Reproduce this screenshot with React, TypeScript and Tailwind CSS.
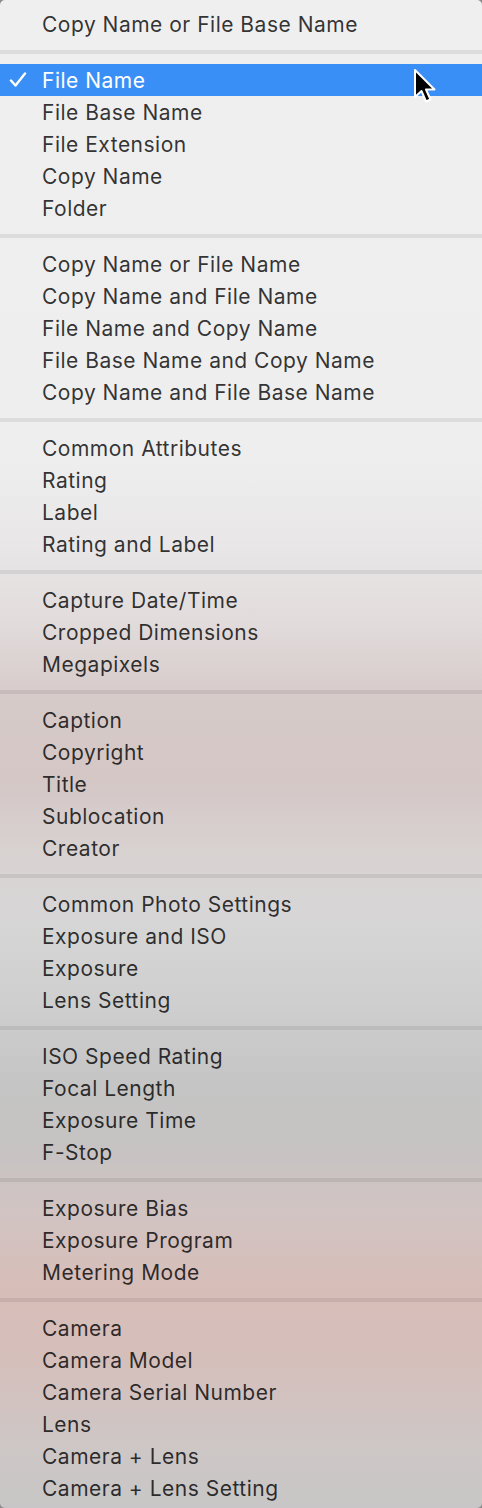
import React from "react";

type Group = { items: string[] };

const groups: Group[] = [
  { items: ["Copy Name or File Base Name"] },
  { items: ["File Name", "File Base Name", "File Extension", "Copy Name", "Folder"] },
  {
    items: [
      "Copy Name or File Name",
      "Copy Name and File Name",
      "File Name and Copy Name",
      "File Base Name and Copy Name",
      "Copy Name and File Base Name",
    ],
  },
  { items: ["Common Attributes", "Rating", "Label", "Rating and Label"] },
  { items: ["Capture Date/Time", "Cropped Dimensions", "Megapixels"] },
  { items: ["Caption", "Copyright", "Title", "Sublocation", "Creator"] },
  { items: ["Common Photo Settings", "Exposure and ISO", "Exposure", "Lens Setting"] },
  { items: ["ISO Speed Rating", "Focal Length", "Exposure Time", "F-Stop"] },
  { items: ["Exposure Bias", "Exposure Program", "Metering Mode"] },
  {
    items: [
      "Camera",
      "Camera Model",
      "Camera Serial Number",
      "Lens",
      "Camera + Lens",
      "Camera + Lens Setting",
    ],
  },
];

const selected = "File Name";

const backdrop =
  "linear-gradient(180deg, #efeff0 0px, #eeeeef 460px, #e9e7e8 540px, #e2dcdc 620px, #d6cac9 700px, #d4c7c6 780px, #d8d3d2 860px, #d7d6d7 920px, #cfcfcf 1000px, #c5c5c5 1080px, #c6c3c2 1150px, #d1c4c3 1210px, #d7bdb8 1290px, #d5bfbb 1360px, #cdc7c6 1450px, #c8c6c6 1508px)";

function Cursor() {
  return (
    <svg
      width="26"
      height="38"
      viewBox="0 0 26 38"
      className="absolute left-[412px] top-[68px]"
    >
      <path
        d="M3 2 L3 29 L9.5 23 L14 33.5 L18.5 31.5 L14 21.5 L22.5 21.5 Z"
        fill="#000"
        stroke="#fff"
        strokeWidth="2"
        strokeLinejoin="round"
      />
    </svg>
  );
}

function Check() {
  return (
    <svg width="18" height="16" viewBox="0 0 18 16" className="absolute left-[9px] top-[8px]">
      <path
        d="M2 8.5 L6.5 13.5 L16 1.5"
        fill="none"
        stroke="#fff"
        strokeWidth="2.4"
        strokeLinecap="round"
        strokeLinejoin="round"
      />
    </svg>
  );
}

function Separator() {
  return (
    <div className="h-6 pt-[10px]">
      <div className="h-1 bg-[rgba(0,0,0,0.075)]" />
    </div>
  );
}

function Item({ label }: { label: string }) {
  const active = label === selected;
  return (
    <div
      className={
        "relative flex h-8 items-center pl-[42px] pt-[2px] text-[21px] tracking-[0.5px] " +
        (active ? "bg-[#3a8ff7] text-white" : "text-[rgba(0,0,0,0.8)]")
      }
    >
      {active && <Check />}
      {label}
    </div>
  );
}

export default function App() {
  return (
    <div className="h-[1508px] w-[482px] bg-[#8a8a8a]">
      <div
        className="relative h-full w-full overflow-hidden rounded-[5px] pt-2"
        style={{ background: backdrop, fontFamily: "Inter, 'Open Sans', sans-serif" }}
      >
        {groups.map((g, gi) => (
          <div key={gi}>
            {gi > 0 && <Separator />}
            {g.items.map((label) => (
              <Item key={label} label={label} />
            ))}
          </div>
        ))}
        <Cursor />
      </div>
    </div>
  );
}
